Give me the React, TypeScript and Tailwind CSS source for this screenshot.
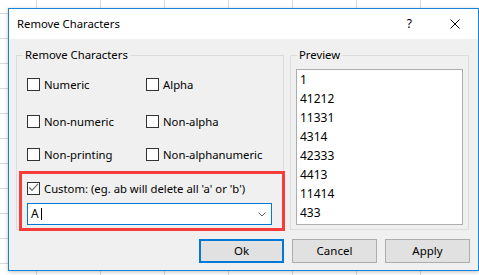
import React from "react";

const font = "font-['Noto_Sans','Liberation_Sans',sans-serif]";

function Box({ checked = false }: { checked?: boolean }) {
  return (
    <span className="w-[13px] h-[13px] shrink-0 border border-[#333333] bg-white flex items-center justify-center">
      {checked && (
        <svg width="11" height="11" viewBox="0 0 11 11">
          <path d="M1.3 4.5 L4 7.4 L10 0.9" fill="none" stroke="#6f6f6f" strokeWidth="1.3" />
        </svg>
      )}
    </span>
  );
}

function Check({ label, checked = false }: { label: string; checked?: boolean }) {
  return (
    <div className="flex items-center gap-[4px] h-[13px]">
      <Box checked={checked} />
      <span className="text-[11.3px] leading-[13px] whitespace-nowrap text-black">{label}</span>
    </div>
  );
}

function Grid() {
  const xs = [36, 100, 164, 228, 292, 356, 420];
  const ys = Array.from({ length: 11 }, (_, i) => 13 + i * 25);
  return (
    <svg className="absolute inset-0" width="479" height="275">
      {xs.map((x) => (
        <line key={"x" + x} x1={x + 0.5} y1="0" x2={x + 0.5} y2="275" stroke="#d8d8d8" strokeWidth="1" />
      ))}
      {ys.map((y) => (
        <line key={"y" + y} x1="0" y1={y + 0.5} x2="479" y2={y + 0.5} stroke="#d8d8d8" strokeWidth="1" />
      ))}
    </svg>
  );
}

export default function App() {
  const preview = ["1", "41212", "11331", "4314", "42333", "4413", "11414", "433"];
  return (
    <div className={`relative w-[479px] h-[275px] overflow-hidden bg-white ${font}`}>
      <Grid />
      <div className="absolute left-[8px] top-[8px] w-[471px] h-[263px] border border-[#1883d7] bg-[#f0f0f0] flex flex-col shadow-[0_1px_4px_rgba(0,0,0,0.25)]">
        {/* title bar */}
        <div className="h-[30px] bg-white flex items-center pl-[8px] shrink-0">
          <span className="text-[11.3px] text-black leading-none">Remove Characters</span>
          <span className="ml-auto text-[12px] text-black leading-none mr-[38px]">?</span>
          <svg width="10" height="10" viewBox="0 0 10 10" className="mr-[18px]">
            <path d="M0.5 0.5 L9.5 9.5 M9.5 0.5 L0.5 9.5" stroke="#000" strokeWidth="1" />
          </svg>
        </div>
        {/* body */}
        <div className="flex flex-col pl-[7px] pr-[8px] pt-[8px]">
          <div className="flex gap-[6px]">
            <fieldset className="w-[268px] h-[183px] border border-[#dcdcdc] relative">
              <legend className="ml-[6px] px-[2px] text-[11.3px] leading-[16px] text-black">Remove Characters</legend>
              <div className="pl-[10px] pt-[15px] flex flex-col">
                <div className="grid grid-cols-[119px_1fr]">
                  <Check label="Numeric" />
                  <Check label="Alpha" />
                </div>
                <div className="grid grid-cols-[119px_1fr] mt-[24px]">
                  <Check label="Non-numeric" />
                  <Check label="Non-alpha" />
                </div>
                <div className="grid grid-cols-[119px_1fr] mt-[20px]">
                  <Check label="Non-printing" />
                  <Check label="Non-alphanumeric" />
                </div>
                <div className="mt-[21px]">
                  <Check label="Custom: (eg. ab will delete all 'a' or 'b')" checked />
                </div>
                <div className="mt-[8px] w-[245px] h-[22px] border border-[#0078d7] bg-white flex items-center pl-[3px] pr-[5px]">
                  <span className="text-[12px] text-black leading-none">A</span>
                  <span className="w-[1px] h-[12px] bg-black ml-[2px]" />
                  <svg width="8" height="5" viewBox="0 0 8 5" className="ml-auto">
                    <path d="M0.5 0.5 L4 4 L7.5 0.5" fill="none" stroke="#606060" strokeWidth="1" />
                  </svg>
                </div>
              </div>
            </fieldset>
            <fieldset className="w-[179px] h-[183px] border border-[#dcdcdc]">
              <legend className="ml-[6px] px-[2px] text-[11.3px] leading-[16px] text-black">Preview</legend>
              <div className="mt-[6px] mx-[5px] h-[156px] border border-[#adadad] bg-white pl-[3px] overflow-hidden">
                {preview.map((p) => (
                  <div key={p} className="h-[19px] leading-[19px] text-[12px] text-black">
                    {p}
                  </div>
                ))}
              </div>
            </fieldset>
          </div>
          <div className="flex justify-end gap-[8px] mt-[9px]">
            <button className="w-[85px] h-[24px] border-2 border-[#0078d7] bg-[#e1e1e1] text-[11.5px] text-black">Ok</button>
            <button className="w-[85px] h-[24px] border border-[#adadad] bg-[#e1e1e1] text-[11.5px] text-black">Cancel</button>
            <button className="w-[85px] h-[24px] border border-[#adadad] bg-[#e1e1e1] text-[11.5px] text-black">Apply</button>
          </div>
        </div>
      </div>
      {/* red annotation */}
      <div className="absolute left-[19px] top-[171px] w-[266px] h-[60px] border-[3px] border-[#f83b3b]" />
    </div>
  );
}
